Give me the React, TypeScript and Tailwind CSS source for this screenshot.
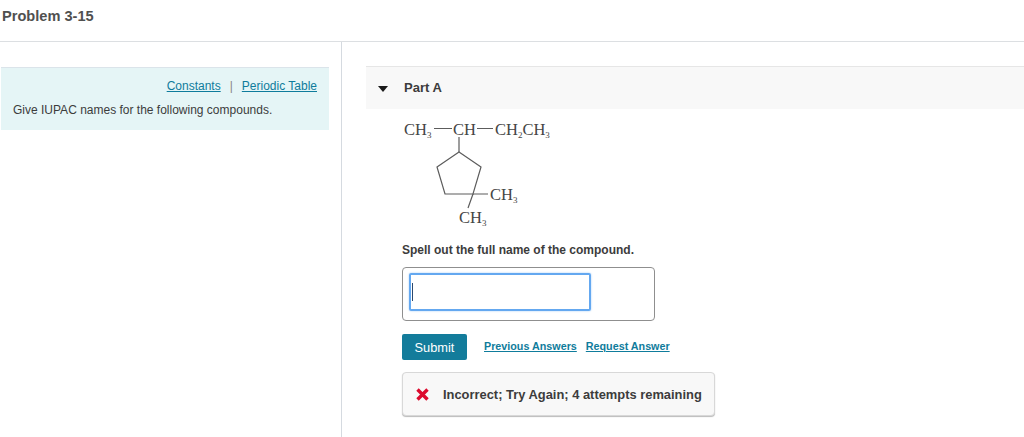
export default function App() {
  const sans = "font-['Liberation_Sans',Arial,sans-serif]";
  return (
    <div className={`${sans} w-[1024px] h-[437px] overflow-hidden bg-white text-[#333] flex flex-col`}>
      <div className="h-[42px] shrink-0 border-b border-[#dcdfe2] pl-[2px] pt-[7px] text-[14.6px] leading-[18px] font-bold text-[#50504f]">
        Problem 3-15
      </div>
      <div className="flex flex-1 min-h-0">
        <div className="w-[342px] shrink-0 border-r border-[#d5dae0] pt-[25px] pl-px">
          <div className="w-[328px] h-[63px] bg-[#e5f5f6] border-t border-[#dbe4ea] pt-[11px]">
            <div className="flex justify-end pr-[12px] text-[12px] leading-[15px] text-[#0f7c9c] gap-[9px]">
              <a className="underline">Constants</a>
              <span className="text-[#888]">|</span>
              <a className="underline">Periodic Table</a>
            </div>
            <div className="pl-[12px] pt-[9px] text-[12px] leading-[15px] text-[#3c3c3c]">
              Give IUPAC names for the following compounds.
            </div>
          </div>
        </div>
        <div className="flex-1 pl-[24px] pt-[24px] min-w-0">
          <div className="h-[43px] bg-[#f8f8f8] border-t border-[#e6e6e6] flex items-center pl-[12px]">
            <svg width="10" height="6" viewBox="0 0 10 6" className="mt-[1px]">
              <path d="M0 0H10L5 6Z" fill="#1a1a1a" />
            </svg>
            <span className="ml-[16px] text-[13px] font-bold text-[#3c3c3c]">Part A</span>
          </div>
          <svg width="240" height="125" viewBox="0 0 240 125" className="block ml-[30px] mt-[3px]">
            <g fontFamily="'Liberation Serif',serif" fontSize="16.5" fill="#454545">
              <text x="8" y="22.5">CH<tspan fontSize="9" dy="3">3</tspan></text>
              <text x="57" y="22.5">CH</text>
              <text x="99" y="22.5">CH<tspan fontSize="9" dy="3">2</tspan><tspan dy="-3">CH</tspan><tspan fontSize="9" dy="3">3</tspan></text>
              <text x="94" y="88">CH<tspan fontSize="9" dy="3">3</tspan></text>
              <text x="63" y="111">CH<tspan fontSize="9" dy="3">3</tspan></text>
            </g>
            <g stroke="#5c5c5c" strokeWidth="1.2" fill="none">
              <path d="M38 16.5H56M81 16.5H97" />
              <path d="M63 25V40" />
              <path d="M63 40L85 55L77 82H49L41 55Z" />
              <path d="M77 82L72 96M77 82H92" />
            </g>
          </svg>
          <div className="ml-[36px] mt-[6px] text-[12px] leading-[14px] font-bold text-[#3c3c3c]">
            Spell out the full name of the compound.
          </div>
          <div className="ml-[36px] mt-[10px] w-[253px] h-[54px] rounded-[4px] border border-[#8f8f8f] pl-[6px] pt-[5px]">
            <div className="w-[182px] h-[38px] rounded-[2px] border-2 border-[#64a8f0] flex items-center pl-[1px] shadow-[0_0_2px_#9cc8f5]">
              <div className="w-px h-[18px] bg-[#2a4a70]" />
            </div>
          </div>
          <div className="ml-[36px] mt-[13px] flex items-center">
            <div className="w-[65px] h-[26px] rounded-[2px] bg-[#137c9b] text-white text-[12.8px] pt-px flex items-center justify-center">
              Submit
            </div>
            <a className="ml-[17px] mb-px text-[10.75px] font-bold text-[#0f7c9c] underline">Previous Answers</a>
            <a className="ml-[9px] mb-px text-[10.75px] font-bold text-[#0f7c9c] underline">Request Answer</a>
          </div>
          <div className="ml-[36px] mt-[12px] w-[313px] h-[44px] rounded-[4px] border border-[#d8d8d8] bg-[#f8f8f8] shadow-[0_1px_1px_#bbb] flex items-center pl-[13px]">
            <svg width="13" height="13" viewBox="0 0 13 13">
              <path d="M1.5 1.5L11.5 11.5M11.5 1.5L1.5 11.5" stroke="#dc0a2d" strokeWidth="3.4" />
            </svg>
            <span className="ml-[14px] pt-[2px] text-[12.9px] font-bold text-[#3c3c3c]">Incorrect; Try Again; 4 attempts remaining</span>
          </div>
        </div>
      </div>
    </div>
  );
}
